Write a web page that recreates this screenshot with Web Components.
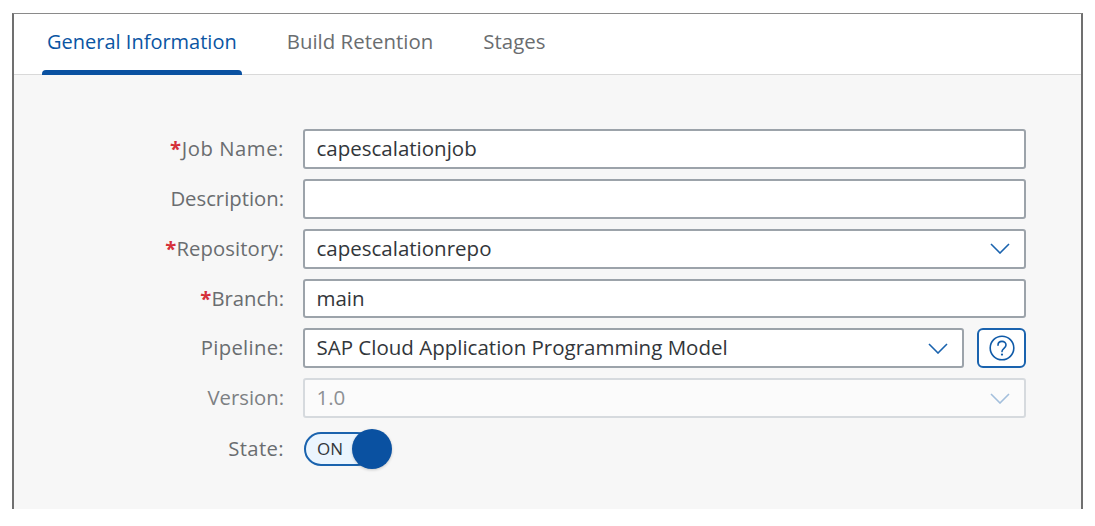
<!DOCTYPE html>
<html><head><meta charset="utf-8"><style>
html,body{margin:0;background:#fff}
body{font-family:"Open Sans","Noto Sans",sans-serif;width:1095px;height:526px;overflow:hidden}
form-row[label="State"]{margin-top:1px;--ls:.35px}
form-row[label="Job Name"]{--ls:.55px}
form-row[label="Pipeline"]{--ls:.3px}
form-row[label="Repository"]{--ls:.1px}
</style></head><body>
<template id="t-panel"><style>
:host{display:block;box-sizing:border-box;margin:13px 12px 0 12px;width:1071px;height:496px;border-left:2px solid #707070;border-right:2px solid #707070;border-top:1px solid #8a8a8a;background:#f7f7f7}
.tabs{display:flex;gap:0;height:60px;background:#fff;border-bottom:1px solid #d9d9d9;padding-left:28px;box-sizing:content-box}
.body{display:flex;flex-direction:column;padding-top:54.3px}
</style><div class="tabs"><slot name="tabs"></slot></div><div class="body"><slot></slot></div></template>

<template id="t-tab"><style>
:host{display:block;position:relative;box-sizing:border-box;height:61px;padding:0 5px;margin-right:40px;font-size:20.4px;line-height:55px;color:#6a6d70;letter-spacing:.03px}
:host([active]){color:#0a55a3;font-size:20px;line-height:56px;letter-spacing:0}
.bar{display:none;position:absolute;left:0;right:0;bottom:0;height:5px;background:#0a51a1;border-radius:4px 4px 0 0}
:host([active]) .bar{display:block}
</style><slot></slot><span class="bar"></span></template>

<template id="t-row"><style>
:host{display:grid;grid-template-columns:270px 723px;column-gap:19px;align-items:center;height:39.8px;margin-bottom:10px}
label{justify-self:end;font-size:20.3px;color:#6a6d70;white-space:nowrap;padding-bottom:2px;letter-spacing:var(--ls,0)}
:host([disabled]) label{color:#7d8083}
.req{color:#d5303a;font-weight:700;display:none}
:host([required]) .req{display:inline}
.ctl{display:flex;gap:13px;height:100%;min-width:0}
</style><label><span class="req">*</span><span id="l"></span>:</label><div class="ctl"><slot></slot></div></template>

<template id="t-field"><style>
:host{flex:1;display:flex;align-items:center;box-sizing:border-box;height:100%;background:#fff;border:2px solid #9ca3aa;border-radius:3px;padding:0 11.5px;font-size:20.5px;color:#32363a;min-width:0}
:host([disabled]){border-color:#d6dade;background:#fbfbfb;color:#8d9094}
.t{flex:1;white-space:nowrap;padding-bottom:2px}
svg{display:none;width:20px;height:11px;flex:none;margin-right:3px;fill:none;stroke:#1a63ae;stroke-width:1.6}
:host([select]) svg{display:block}
:host([disabled]) svg{stroke:#a3bfdc}
</style><span class="t"><slot></slot></span><svg viewBox="0 0 20 11"><path d="M1 1 10 10 19 1"/></svg></template>

<template id="t-help"><style>
:host{flex:none;display:flex;align-items:center;justify-content:center;box-sizing:border-box;width:49px;height:100%;background:#fff;border:2px solid #1a63ae;border-radius:6px}
svg{width:26px;height:26px}
</style><svg viewBox="0 0 26 26" fill="none" stroke="#0f5aa8" stroke-width="1.6"><circle cx="13" cy="13" r="11.8"/><path d="M9 10.2C9 7.8 10.8 6.4 13 6.4s4 1.5 4 3.6c0 3.4-4 3.3-4 6.6" stroke-linecap="round"/><circle cx="13" cy="19.6" r="1.1" fill="#0f5aa8" stroke="none"/></svg></template>

<template id="t-switch"><style>
:host{display:flex;align-items:center;position:relative;box-sizing:border-box;width:70px;height:34px;margin-left:1px;align-self:center;background:#ebf5fe;border:2px solid #1a63ae;border-radius:17px;padding-left:11px;font-size:17px;color:#32363a}
.k{position:absolute;right:-20px;top:-5px;width:40px;height:40px;border-radius:50%;background:#0a51a1;box-shadow:0 1px 3px rgba(0,0,0,.2)}
</style><slot></slot><span class="k"></span></template>

<form-panel>
  <tab-item slot="tabs" active>General Information</tab-item>
  <tab-item slot="tabs">Build Retention</tab-item>
  <tab-item slot="tabs">Stages</tab-item>
  <form-row label="Job Name" required><text-field>capescalationjob</text-field></form-row>
  <form-row label="Description"><text-field></text-field></form-row>
  <form-row label="Repository" required><text-field select>capescalationrepo</text-field></form-row>
  <form-row label="Branch" required><text-field>main</text-field></form-row>
  <form-row label="Pipeline"><text-field select>SAP Cloud Application Programming Model</text-field><help-button></help-button></form-row>
  <form-row label="Version" disabled><text-field select disabled>1.0</text-field></form-row>
  <form-row label="State"><on-switch>ON</on-switch></form-row>
</form-panel>
<script>
function def(name,tid,init){customElements.define(name,class extends HTMLElement{constructor(){super();const s=this.attachShadow({mode:"open"});s.appendChild(document.getElementById(tid).content.cloneNode(true));}connectedCallback(){if(init)init(this);}});}
def("form-panel","t-panel");
def("tab-item","t-tab");
def("form-row","t-row",e=>{e.shadowRoot.getElementById("l").textContent=e.getAttribute("label");});
def("text-field","t-field");
def("help-button","t-help");
def("on-switch","t-switch");
</script>
</body></html>
